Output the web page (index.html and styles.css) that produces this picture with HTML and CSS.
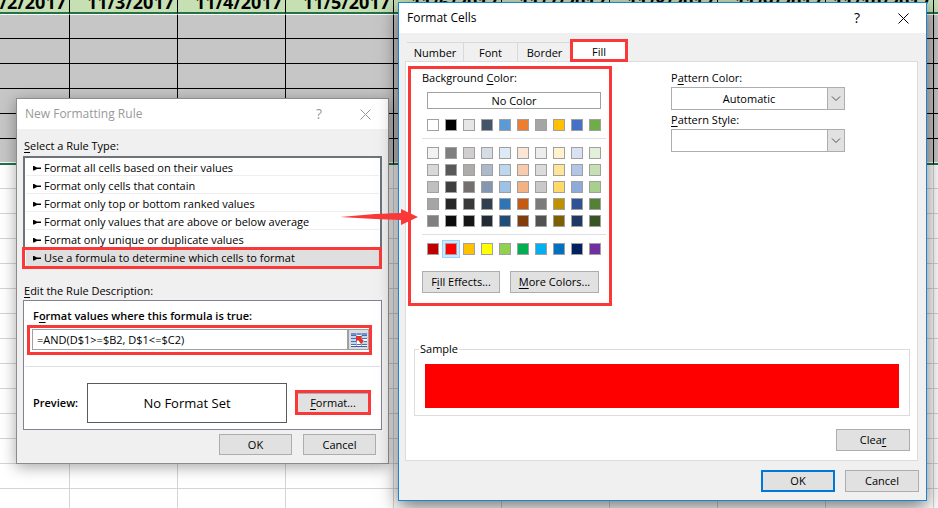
FILE: index.html
```html
<!DOCTYPE html>
<html lang="en">
<head>
<meta charset="utf-8">
<title>Format Cells</title>
<link rel="stylesheet" href="styles.css">
</head>
<body>
<main class="desktop">
  <table class="sheet">
    <colgroup><col class="col-first"><col class="col"><col class="col"><col class="col"><col class="col"><col class="col"><col class="col"><col class="col"><col class="col"><col></colgroup>
    <thead><tr id="dates"></tr></thead>
    <tbody id="rows"></tbody>
  </table>

  <section class="dialog rule-dialog" role="dialog" aria-labelledby="rule-title">
    <header class="titlebar">
      <h2 id="rule-title">New Formatting Rule</h2>
      <button class="caption" type="button">?</button>
      <button class="caption" type="button" aria-label="Close"><svg width="11" height="11" viewBox="0 0 11 11"><path d="M.5.5l10 10M10.5.5l-10 10"/></svg></button>
    </header>
    <div class="rule-body">
      <p class="label" id="type-label"><u>S</u>elect a Rule Type:</p>
      <ul class="types" id="types" role="listbox" aria-labelledby="type-label"></ul>
      <p class="label description-label"><u>E</u>dit the Rule Description:</p>
      <div class="description">
        <label class="formula-label" for="formula">F<u>o</u>rmat values where this formula is true:</label>
        <div class="formula marked">
          <input id="formula" type="text" value="=AND(D$1&gt;=$B2, D$1&lt;=$C2)">
          <button class="picker" type="button" aria-label="Collapse dialog">
            <svg width="16" height="14" viewBox="0 0 16 14">
              <path fill="#fff" d="M0 0h16v14H0z"/>
              <path fill="#6d93cf" d="M0 0h16v2H0z"/>
              <path fill="#c4d6f0" d="M0 3h5v2H0zM0 6h5v2H0zM0 9h5v2H0zM11 3h5v2h-5zM11 9h5v2h-5z"/>
              <path fill="none" stroke="#4a70b4" d="M0 2.500h5M0 5.500h5M0 8.500h5M0 11.500h16M11 2.500h5M11 5.500h5M13 8.500h3"/>
              <path fill="none" stroke="#9db6de" d="M5.500 0v14M10.500 0v14"/>
              <path fill="#3a61a8" d="M0 13h16v1H0z"/>
              <path fill="#e0342a" d="M5 3h6l-1 2 3 3-3 3-3-4-2 2z"/>
            </svg>
          </button>
        </div>
        <hr>
        <div class="preview">
          <span class="preview-label">Preview:</span>
          <output class="preview-box">No Format Set</output>
          <button class="btn format marked" type="button"><span><u>F</u>ormat...</span></button>
        </div>
      </div>
      <footer class="rule-actions">
        <button class="btn" type="button">OK</button>
        <button class="btn" type="button">Cancel</button>
      </footer>
    </div>
  </section>

  <section class="dialog cells-dialog" role="dialog" aria-labelledby="cells-title">
    <header class="titlebar">
      <h2 id="cells-title">Format Cells</h2>
      <button class="caption" type="button">?</button>
      <button class="caption" type="button" aria-label="Close"><svg width="11" height="11" viewBox="0 0 11 11"><path d="M.5.5l10 10M10.5.5l-10 10"/></svg></button>
    </header>
    <div class="cells-body">
      <div class="tabs" role="tablist">
        <button class="tab" role="tab" type="button">Number</button>
        <button class="tab" role="tab" type="button">Font</button>
        <button class="tab" role="tab" type="button">Border</button>
        <button class="tab active marked" role="tab" type="button" aria-selected="true">Fill</button>
      </div>
      <div class="panel" role="tabpanel">
        <div class="columns">
          <div class="background marked">
            <p class="label">Background <u>C</u>olor:</p>
            <button class="no-color" type="button">No Color</button>
            <div class="swatches" id="theme"></div>
            <hr>
            <div class="swatches" id="shades"></div>
            <hr>
            <div class="swatches" id="standard"></div>
            <div class="color-actions">
              <button class="btn effects" type="button"><span>F<u>i</u>ll Effects...</span></button>
              <button class="btn more" type="button"><span><u>M</u>ore Colors...</span></button>
            </div>
          </div>
          <div class="pattern">
            <label for="pattern-color">P<u>a</u>ttern Color:</label>
            <div class="select">
              <select id="pattern-color"><option>Automatic</option></select>
              <span class="arrow"><svg width="10" height="6" viewBox="0 0 10 6"><path d="M1 .5l4 4 4-4"/></svg></span>
            </div>
            <label for="pattern-style"><u>P</u>attern Style:</label>
            <div class="select">
              <select id="pattern-style"><option></option></select>
              <span class="arrow"><svg width="10" height="6" viewBox="0 0 10 6"><path d="M1 .5l4 4 4-4"/></svg></span>
            </div>
          </div>
        </div>
        <fieldset class="sample">
          <legend>Sample</legend>
          <div class="sample-fill"></div>
        </fieldset>
        <div class="clear-row"><button class="btn" type="button"><span>Clea<u>r</u></span></button></div>
      </div>
    </div>
    <footer class="cells-actions">
      <button class="btn primary" type="button">OK</button>
      <button class="btn" type="button">Cancel</button>
    </footer>
  </section>

  <svg class="pointer" width="78" height="18" viewBox="0 0 78 18"><path d="M0 9l35-3 26-1V1l17 8-17 8v-5l-26-1z"/></svg>
</main>
<script src="script.js"></script>
</body>
</html>
```
FILE: styles.css
```css
* { box-sizing: border-box; }

body {
  margin: 0;
  font: 11px/16px "Open Sans", "Noto Sans", sans-serif;
  color: #000;
}

button, input, select { font: inherit; color: inherit; margin: 0; padding: 0; border-radius: 0; }
h2, p, ul { margin: 0; padding: 0; font: inherit; }
hr { border: 0; height: 1px; background: #dedee4; margin: 0; }
u { text-underline-offset: 2px; text-decoration-thickness: 1px; }

.desktop {
  position: relative;
  height: 100vh;
  overflow: hidden;
  background: #fff;
}

/* Worksheet */
.sheet {
  width: 100%;
  table-layout: fixed;
  border-collapse: separate;
  border-spacing: 0;
}
.col-first { width: 70px; }
.col { width: 108px; }
.sheet th, .sheet td { padding: 0; border-right: 1px solid #d4d4d4; border-bottom: 1px solid #d4d4d4; }
.sheet th {
  height: 14px;
  background: #c6e0b4;
  border-right-color: #000;
  border-bottom: 2px solid #217346;
}
.date {
  display: flex;
  align-items: flex-end;
  justify-content: flex-end;
  height: 12px;
  padding-right: 3px;
  overflow: hidden;
  font: bold 18px/20px "Open Sans", "Noto Sans", sans-serif;
}
.sheet td { height: 25px; }
.selected td { background: #c6c6c6; border-color: #000; }
.selected:first-child td { border-top: 1px solid #fff; }
.selected.last td { height: 26px; border-bottom: 2px solid #217346; box-shadow: inset 0 -1px #fff; }
.after td { height: 24px; }
.sheet tr > :last-child { border-right: 0; }

/* Dialog windows */
.dialog { position: absolute; background: #f0f0f0; }
.rule-dialog {
  left: 16px;
  top: 98px;
  width: 373px;
  border: 1px solid #8c8c8c;
  box-shadow: 0 3px 14px rgba(0, 0, 0, .35);
}
.cells-dialog {
  left: 398px;
  top: 2px;
  width: 529px;
  border: 1px solid #1883d7;
  box-shadow: 0 6px 18px rgba(0, 0, 0, .55);
}
.titlebar { display: flex; align-items: center; height: 30px; padding-left: 8px; background: #fff; }
.titlebar h2 { flex: 1; font-size: 12px; }
.rule-dialog .titlebar { color: #999; }
.caption {
  display: flex;
  align-items: center;
  justify-content: center;
  width: 46px;
  height: 28px;
  border: 0;
  background: none;
  font-size: 14px;
}
.caption svg { fill: none; stroke: currentColor; }

.btn {
  display: flex;
  align-items: center;
  justify-content: center;
  width: 74px;
  height: 22px;
  border: 1px solid #adadad;
  background: #e1e1e1;
}
.btn.primary { border: 2px solid #0078d7; }

.marked { position: relative; }
.marked::after {
  content: "";
  position: absolute;
  inset: -3px;
  border: 3px solid #fb3838;
  pointer-events: none;
}

/* New Formatting Rule */
.rule-body { padding: 9px 6px 8px; }
.label { padding-left: 1px; }
.types {
  margin-top: 2px;
  border: 2px solid #6e727a;
  background: #fff;
  list-style: none;
}
.type {
  display: flex;
  align-items: center;
  gap: 3px;
  height: 18px;
  padding: 3px 0 0 7px;
  margin: 0 1px;
  border-bottom: 1px solid #eee;
}
.type svg { width: 8px; height: 5px; }
.type span { line-height: 14px; }
.type.marked { background: #dfdfdf; border-bottom-color: #dfdfdf; }
.type.marked::after { inset: -1px -3px -4px -4px; }
.description-label { margin-top: 15px; }
.description { margin-top: 1px; border: 1px solid #83838f; background: #fff; padding: 7px 0 6px; }
.formula-label { display: block; padding-left: 9px; font-weight: 600; }
.formula { display: flex; height: 21px; margin: 5px 12px 16px 8px; }
.formula::after { inset: -4px -3px -5px -5px; }
.formula input { flex: 1; min-width: 0; padding: 0 4px; border: 1px solid #a0a0a0; background: #fff; }
.picker {
  display: flex;
  align-items: center;
  justify-content: center;
  width: 21px;
  border: 1px solid #a0a0a0;
  background: #dcdcdc;
}
.description hr { margin: 0 1px; }
.preview { display: flex; align-items: center; padding: 16px 12px 0 9px; }
.preview-label { width: 54px; font-weight: 600; }
.preview-box {
  flex: 1;
  margin-right: 10px;
  border: 1px solid #5a5a5a;
  font-size: 13px;
  line-height: 38px;
  text-align: center;
}
.btn.format { width: 72px; height: 20px; }
.btn.format::after { inset: -4px -3px -3px; }
.rule-actions { display: flex; justify-content: flex-end; gap: 11px; margin-top: 4px; padding-right: 6px; }
.rule-actions .btn { width: 73px; height: 21px; }

/* Format Cells */
.cells-body { padding: 9px 8px 0 6px; }
.tabs { display: flex; padding-left: 2px; height: 19px; }
.tab {
  width: 54px;
  height: 19px;
  border: solid #d9d9d9;
  border-width: 1px 1px 0 0;
  background: #f0f0f0;
  line-height: 20px;
}
.tab:first-child { width: 57px; }
.tab.active { width: 54px; height: 19px; border: 0; background: #fff; line-height: 18px; }
.tab.active::after { inset: -3px -2px -1px; }
.panel { border: 1px solid #dcdcdc; background: #fff; padding: 7px 7px 9px 8px; }
.columns { display: flex; gap: 62px; margin-left: -3px; }
.background { width: 198px; padding: 1px 3px 10px 11px; }
.background .label { padding: 0; }
.no-color {
  display: block;
  width: 174px;
  height: 17px;
  margin: 6px 0 10px 5px;
  border: 1px solid #a0a0a0;
  background: #fff;
  line-height: 15px;
}
.swatches { display: grid; grid-template-columns: repeat(10, 12px); gap: 5px 6px; padding-left: 5px; }
.swatch { width: 12px; height: 12px; border: 1px solid #a0a0a0; }
.swatch.chosen { outline: 2px solid #cce8ff; box-shadow: 0 0 0 3px #99d1ff; }
.background hr { margin: 7px 0 8px; }
.color-actions { display: flex; gap: 10px; margin-top: 16px; }
.btn.effects { width: 78px; }
.btn.more { width: 89px; }
.pattern { width: 174px; padding-top: 1px; }
.pattern label { display: block; }
.select { position: relative; margin: 1px 0 2px; }
.select select {
  display: block;
  width: 100%;
  height: 23px;
  padding-right: 18px;
  border: 1px solid #adadad;
  background: #fff;
  appearance: none;
  text-align-last: center;
}
.arrow {
  position: absolute;
  inset: 0 0 0 auto;
  display: flex;
  align-items: center;
  justify-content: center;
  width: 18px;
  border: 1px solid #adadad;
  background: #e1e1e1;
  pointer-events: none;
}
.arrow svg { fill: none; stroke: #505050; }
.sample { margin: 38px 0 0; padding: 7px 10px; border: 1px solid #dcdcdc; }
.sample legend { margin-left: -6px; padding: 0 1px; }
.sample-fill { height: 44px; background: #f00; }
.clear-row { display: flex; justify-content: flex-end; margin-top: 13px; }
.cells-actions { display: flex; justify-content: flex-end; gap: 10px; padding: 9px 7px 8px; }

.pointer { position: absolute; left: 340px; top: 208px; fill: #fb3838; }
```
FILE: script.js
```js
const byId = (id) => document.getElementById(id);

for (let day = 2; day <= 11; day++) {
  const th = document.createElement("th");
  th.innerHTML = `<div class="date">${day < 11 ? `11/${day}/2017` : ""}</div>`;
  byId("dates").append(th);
}

for (let r = 0; r < 20; r++) {
  const tr = document.createElement("tr");
  if (r < 6) tr.className = r === 5 ? "selected last" : "selected";
  if (r === 6) tr.className = "after";
  tr.innerHTML = "<td></td>".repeat(10);
  byId("rows").append(tr);
}

const types = [
  "Format all cells based on their values",
  "Format only cells that contain",
  "Format only top or bottom ranked values",
  "Format only values that are above or below average",
  "Format only unique or duplicate values",
  "Use a formula to determine which cells to format",
];
types.forEach((text, i) => {
  const last = i === types.length - 1;
  byId("types").insertAdjacentHTML("beforeend",
    `<li class="type${last ? " marked" : ""}" role="option" aria-selected="${last}">` +
    `<svg viewBox="0 0 8 5"><path d="M0 0h1l3 1.500h4v1.500h-4l-3 1.500h-1z"/></svg><span>${text}</span></li>`);
});

const palettes = {
  theme: "fff 000 e7e6e6 44546a 5b9bd5 ed7d31 a5a5a5 ffc000 4472c4 70ad47",
  shades:
    "f2f2f2 7f7f7f d0cece d6dce4 deebf6 fbe5d5 ededed fff2cc d9e2f3 e2efd9 " +
    "d8d8d8 595959 aeabab adb9ca bdd7ee f7cbac dbdbdb fee599 b4c6e7 c5e0b3 " +
    "bfbfbf 3f3f3f 757070 8496b0 9cc3e5 f4b183 c9c9c9 ffd965 8eaadb a8d08d " +
    "a5a5a5 262626 3a3838 323f4f 2e75b5 c55a11 7b7b7b bf9000 2f5496 538135 " +
    "7f7f7f 0c0c0c 171616 222a35 1e4e79 833c0b 525252 7f6000 1f3864 375623",
  standard: "c00000 f00 ffc000 ff0 92d050 00b050 00b0f0 0070c0 002060 7030a0",
};
for (const [id, colors] of Object.entries(palettes)) {
  colors.split(" ").forEach((color) => {
    const b = document.createElement("button");
    b.type = "button";
    b.className = color === "f00" ? "swatch chosen" : "swatch";
    b.style.background = "#" + color;
    b.setAttribute("aria-label", "#" + color);
    byId(id).append(b);
  });
}
```
